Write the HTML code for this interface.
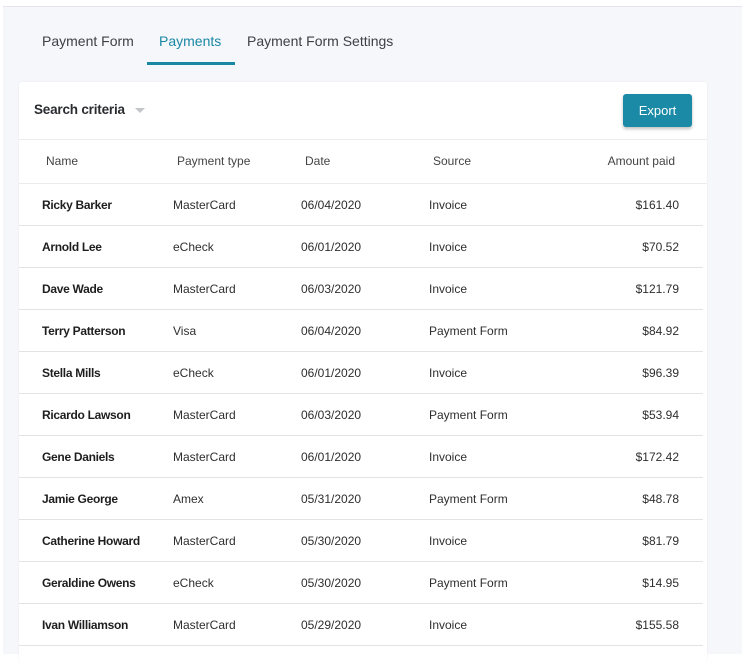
<!DOCTYPE html>
<html><head><style>
*{margin:0;padding:0;box-sizing:border-box}
body{width:742px;height:654px;overflow:hidden;background:#fff;font-family:"Liberation Sans",Arial,sans-serif;position:relative}
#bg{position:absolute;left:3px;top:6px;right:0;bottom:0;background:#f6f7fb;border-top:1px solid #e4e6ec}
.tab{position:absolute;top:33px;font-size:14px;color:#3d3f44}
#ul{position:absolute;left:147px;top:62px;width:88px;height:3px;background:#1a88a3}
#card{position:absolute;left:19px;top:82px;width:688px;height:580px;background:#fff;border-radius:3px;box-shadow:0 0 2px rgba(0,0,0,.06)}
#sc{position:absolute;left:34px;top:102px;font-size:13.5px;font-weight:bold;color:#2a2c30;letter-spacing:-0.2px}
#car{position:absolute;left:135px;top:108px;width:0;height:0;border-left:5px solid transparent;border-right:5px solid transparent;border-top:5px solid #c4c6ca}
#exp{position:absolute;left:623px;top:94px;width:69px;height:33px;background:#1a8aa6;color:#fff;border-radius:3px;font-size:13px;text-align:center;line-height:33px;box-shadow:0 2px 3px rgba(0,0,0,.25)}
.hl{position:absolute;left:19px;width:688px;height:1px;background:#ececef}
.rl{position:absolute;left:19px;width:684px;height:1px;background:#e2e3e6}
.t{position:absolute;font-size:12px;color:#2e2e2e;white-space:nowrap}
.h{font-size:12px;color:#444}
.b{font-weight:bold;color:#1e1e1e;letter-spacing:-0.3px}
.r{text-align:right}
</style></head><body>
<div id="bg"></div>
<div class="tab" style="left:42px">Payment Form</div>
<div class="tab" style="left:159px;color:#1a88a3">Payments</div>
<div class="tab" style="left:247px">Payment Form Settings</div>
<div id="ul"></div>
<div id="card"></div>
<div id="sc">Search criteria</div><div id="car"></div>
<div id="exp">Export</div>
<div class="hl" style="top:139px"></div>
<div class="hl" style="top:183px"></div>
<div class="t h" style="left:46px;top:154px">Name</div>
<div class="t h" style="left:177px;top:154px">Payment type</div>
<div class="t h" style="left:305px;top:154px">Date</div>
<div class="t h" style="left:433px;top:154px">Source</div>
<div class="t h r" style="right:67px;top:154px">Amount paid</div>
<div id="rows"></div>
<script>
const d=[["Ricky Barker","MasterCard","06/04/2020","Invoice","$161.40"],["Arnold Lee","eCheck","06/01/2020","Invoice","$70.52"],["Dave Wade","MasterCard","06/03/2020","Invoice","$121.79"],["Terry Patterson","Visa","06/04/2020","Payment Form","$84.92"],["Stella Mills","eCheck","06/01/2020","Invoice","$96.39"],["Ricardo Lawson","MasterCard","06/03/2020","Payment Form","$53.94"],["Gene Daniels","MasterCard","06/01/2020","Invoice","$172.42"],["Jamie George","Amex","05/31/2020","Payment Form","$48.78"],["Catherine Howard","MasterCard","05/30/2020","Invoice","$81.79"],["Geraldine Owens","eCheck","05/30/2020","Payment Form","$14.95"],["Ivan Williamson","MasterCard","05/29/2020","Invoice","$155.58"]];
let h="";d.forEach((r,i)=>{const y=184+i*42,ty=y+14;
h+=`<div class="t b" style="left:42px;top:${ty}px">${r[0]}</div><div class="t" style="left:173px;top:${ty}px">${r[1]}</div><div class="t" style="left:301px;top:${ty}px">${r[2]}</div><div class="t" style="left:429px;top:${ty}px">${r[3]}</div><div class="t r" style="right:63px;top:${ty}px">${r[4]}</div><div class="rl" style="top:${y+41}px"></div>`;});
document.getElementById("rows").innerHTML=h;
</script>
</body></html>
